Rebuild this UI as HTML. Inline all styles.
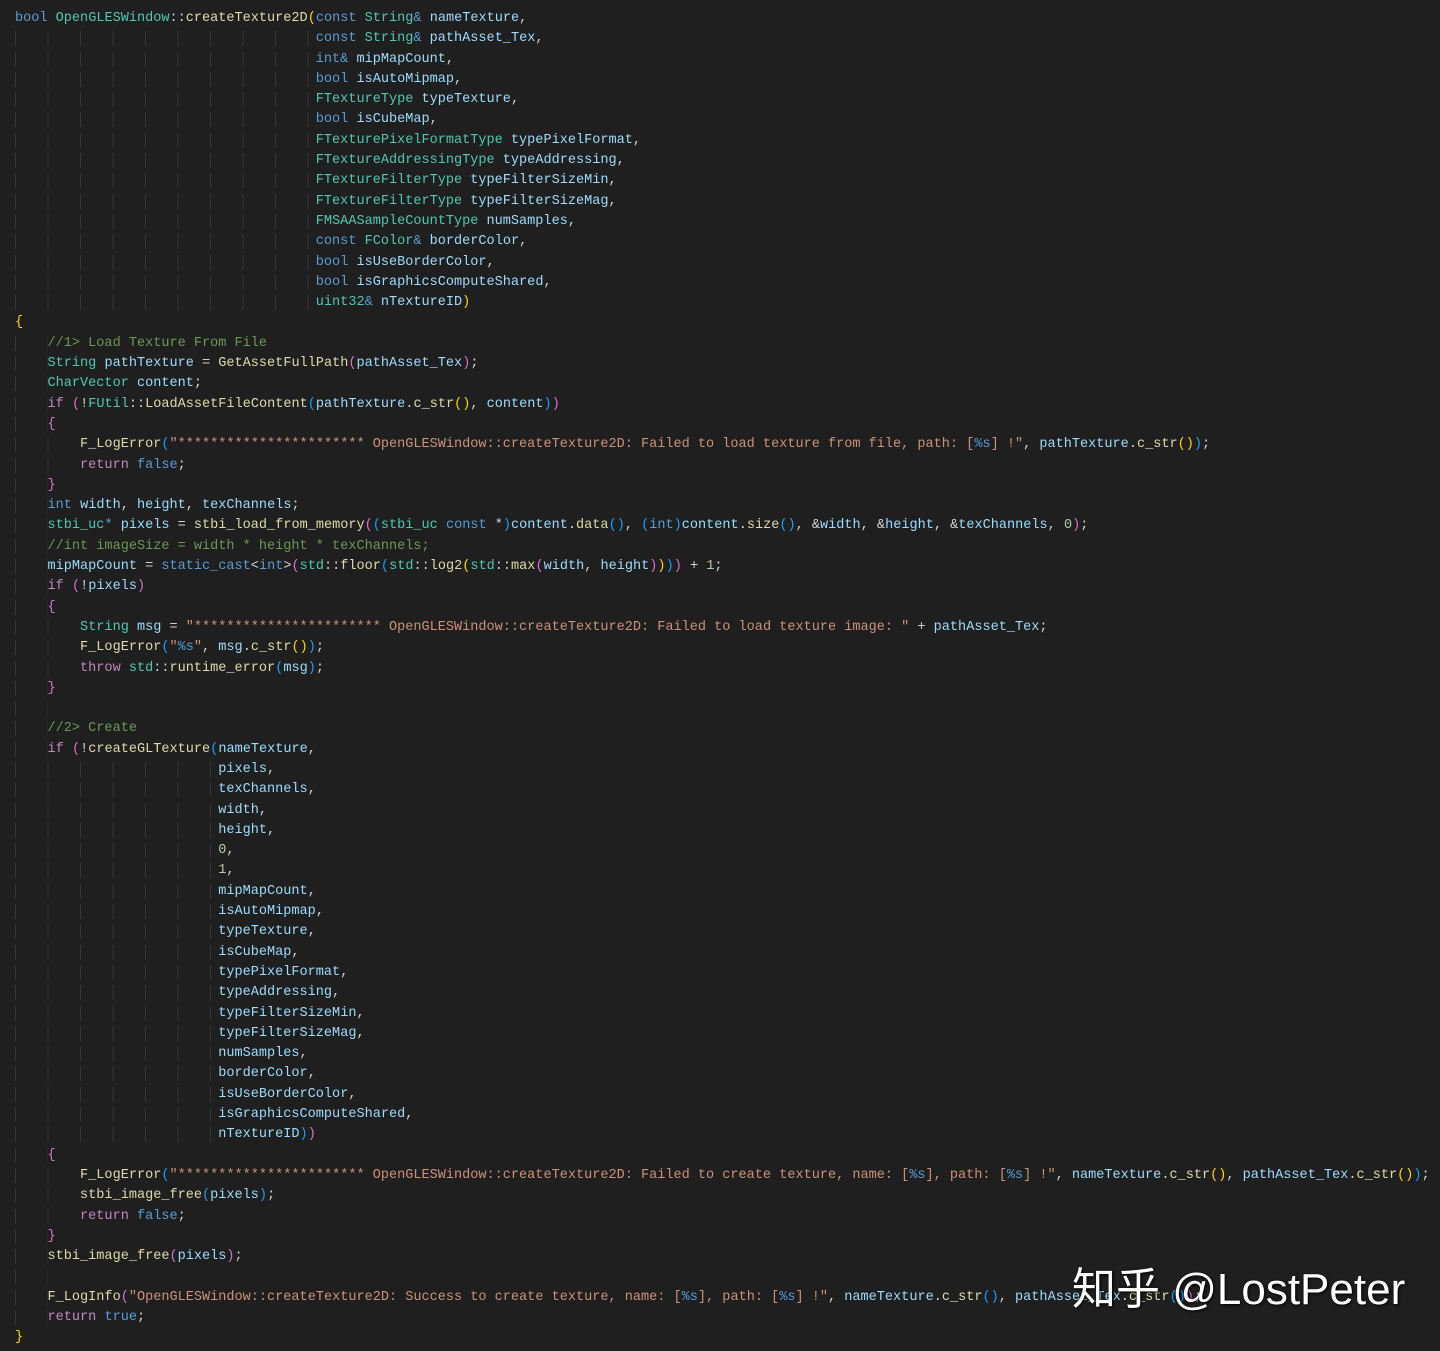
<!DOCTYPE html>
<html><head><meta charset="utf-8">
<style>
html,body{margin:0;padding:0;background:#1f1f1f;}
body{width:1440px;height:1351px;overflow:hidden;position:relative;}
#code{position:absolute;left:15px;top:9px;font-family:"Liberation Mono",monospace;font-size:13.55px;line-height:20.3px;color:#d4d4d4;}
#code div{height:20.3px;white-space:pre;}
.w{background:repeating-linear-gradient(to right,#363636 0,#363636 1px,transparent 1px,transparent 4ch);}
.k{color:#569cd6}.c{color:#c586c0}.t{color:#4ec9b0}.f{color:#dcdcaa}.v{color:#9cdcfe}.s{color:#ce9178}.m{color:#6a9955}.n{color:#b5cea8}
.b1{color:#ffd700}.b2{color:#da70d6}.b3{color:#179fff}
#wm{position:absolute;left:1072px;top:1262px;font-family:"Liberation Sans","Noto Sans CJK SC",sans-serif;font-size:44px;color:#fff;text-shadow:1px 1px 3px #000;line-height:56px;white-space:nowrap;}
</style></head><body>
<div id="code"><div><span class="k">bool</span> <span class="t">OpenGLESWindow</span>::<span class="f">createTexture2D</span><span class="b1">(</span><span class="k">const</span> <span class="t">String</span><span class="k">&amp;</span> <span class="v">nameTexture</span>,</div>
<div><span class="w">                                     </span><span class="k">const</span> <span class="t">String</span><span class="k">&amp;</span> <span class="v">pathAsset_Tex</span>,</div>
<div><span class="w">                                     </span><span class="k">int&amp;</span> <span class="v">mipMapCount</span>,</div>
<div><span class="w">                                     </span><span class="k">bool</span> <span class="v">isAutoMipmap</span>,</div>
<div><span class="w">                                     </span><span class="t">FTextureType</span> <span class="v">typeTexture</span>,</div>
<div><span class="w">                                     </span><span class="k">bool</span> <span class="v">isCubeMap</span>,</div>
<div><span class="w">                                     </span><span class="t">FTexturePixelFormatType</span> <span class="v">typePixelFormat</span>,</div>
<div><span class="w">                                     </span><span class="t">FTextureAddressingType</span> <span class="v">typeAddressing</span>,</div>
<div><span class="w">                                     </span><span class="t">FTextureFilterType</span> <span class="v">typeFilterSizeMin</span>,</div>
<div><span class="w">                                     </span><span class="t">FTextureFilterType</span> <span class="v">typeFilterSizeMag</span>,</div>
<div><span class="w">                                     </span><span class="t">FMSAASampleCountType</span> <span class="v">numSamples</span>,</div>
<div><span class="w">                                     </span><span class="k">const</span> <span class="t">FColor</span><span class="k">&amp;</span> <span class="v">borderColor</span>,</div>
<div><span class="w">                                     </span><span class="k">bool</span> <span class="v">isUseBorderColor</span>,</div>
<div><span class="w">                                     </span><span class="k">bool</span> <span class="v">isGraphicsComputeShared</span>,</div>
<div><span class="w">                                     </span><span class="t">uint32</span><span class="k">&amp;</span> <span class="v">nTextureID</span><span class="b1">)</span></div>
<div><span class="b1">{</span></div>
<div><span class="w">    </span><span class="m">//1&gt; Load Texture From File</span></div>
<div><span class="w">    </span><span class="t">String</span> <span class="v">pathTexture</span> = <span class="f">GetAssetFullPath</span><span class="b2">(</span><span class="v">pathAsset_Tex</span><span class="b2">)</span>;</div>
<div><span class="w">    </span><span class="t">CharVector</span> <span class="v">content</span>;</div>
<div><span class="w">    </span><span class="c">if</span> <span class="b2">(</span>!<span class="t">FUtil</span>::<span class="f">LoadAssetFileContent</span><span class="b3">(</span><span class="v">pathTexture</span>.<span class="f">c_str</span><span class="b1">()</span>, <span class="v">content</span><span class="b3">)</span><span class="b2">)</span></div>
<div><span class="w">    </span><span class="b2">{</span></div>
<div><span class="w">        </span><span class="f">F_LogError</span><span class="b3">(</span><span class="s">"*********************** OpenGLESWindow::createTexture2D: Failed to load texture from file, path: [</span><span class="k">%s</span><span class="s">] !"</span>, <span class="v">pathTexture</span>.<span class="f">c_str</span><span class="b1">()</span><span class="b3">)</span>;</div>
<div><span class="w">        </span><span class="c">return</span> <span class="k">false</span>;</div>
<div><span class="w">    </span><span class="b2">}</span></div>
<div><span class="w">    </span><span class="k">int</span> <span class="v">width</span>, <span class="v">height</span>, <span class="v">texChannels</span>;</div>
<div><span class="w">    </span><span class="t">stbi_uc</span><span class="k">*</span> <span class="v">pixels</span> = <span class="f">stbi_load_from_memory</span><span class="b2">(</span><span class="b3">(</span><span class="t">stbi_uc</span> <span class="k">const</span> *<span class="b3">)</span><span class="v">content</span>.<span class="f">data</span><span class="b3">()</span>, <span class="b3">(</span><span class="k">int</span><span class="b3">)</span><span class="v">content</span>.<span class="f">size</span><span class="b3">()</span>, &amp;<span class="v">width</span>, &amp;<span class="v">height</span>, &amp;<span class="v">texChannels</span>, <span class="n">0</span><span class="b2">)</span>;</div>
<div><span class="w">    </span><span class="m">//int imageSize = width * height * texChannels;</span></div>
<div><span class="w">    </span><span class="v">mipMapCount</span> = <span class="k">static_cast</span>&lt;<span class="k">int</span>&gt;<span class="b2">(</span><span class="t">std</span>::<span class="f">floor</span><span class="b3">(</span><span class="t">std</span>::<span class="f">log2</span><span class="b1">(</span><span class="t">std</span>::<span class="f">max</span><span class="b2">(</span><span class="v">width</span>, <span class="v">height</span><span class="b2">)</span><span class="b1">)</span><span class="b3">)</span><span class="b2">)</span> + <span class="n">1</span>;</div>
<div><span class="w">    </span><span class="c">if</span> <span class="b2">(</span>!<span class="v">pixels</span><span class="b2">)</span></div>
<div><span class="w">    </span><span class="b2">{</span></div>
<div><span class="w">        </span><span class="t">String</span> <span class="v">msg</span> = <span class="s">"*********************** OpenGLESWindow::createTexture2D: Failed to load texture image: "</span> + <span class="v">pathAsset_Tex</span>;</div>
<div><span class="w">        </span><span class="f">F_LogError</span><span class="b3">(</span><span class="s">"</span><span class="k">%s</span><span class="s">"</span>, <span class="v">msg</span>.<span class="f">c_str</span><span class="b1">()</span><span class="b3">)</span>;</div>
<div><span class="w">        </span><span class="c">throw</span> <span class="t">std</span>::<span class="f">runtime_error</span><span class="b3">(</span><span class="v">msg</span><span class="b3">)</span>;</div>
<div><span class="w">    </span><span class="b2">}</span></div>
<div><span class="w">    </span></div>
<div><span class="w">    </span><span class="m">//2&gt; Create</span></div>
<div><span class="w">    </span><span class="c">if</span> <span class="b2">(</span>!<span class="f">createGLTexture</span><span class="b3">(</span><span class="v">nameTexture</span>,</div>
<div><span class="w">                         </span><span class="v">pixels</span>,</div>
<div><span class="w">                         </span><span class="v">texChannels</span>,</div>
<div><span class="w">                         </span><span class="v">width</span>,</div>
<div><span class="w">                         </span><span class="v">height</span>,</div>
<div><span class="w">                         </span><span class="n">0</span>,</div>
<div><span class="w">                         </span><span class="n">1</span>,</div>
<div><span class="w">                         </span><span class="v">mipMapCount</span>,</div>
<div><span class="w">                         </span><span class="v">isAutoMipmap</span>,</div>
<div><span class="w">                         </span><span class="v">typeTexture</span>,</div>
<div><span class="w">                         </span><span class="v">isCubeMap</span>,</div>
<div><span class="w">                         </span><span class="v">typePixelFormat</span>,</div>
<div><span class="w">                         </span><span class="v">typeAddressing</span>,</div>
<div><span class="w">                         </span><span class="v">typeFilterSizeMin</span>,</div>
<div><span class="w">                         </span><span class="v">typeFilterSizeMag</span>,</div>
<div><span class="w">                         </span><span class="v">numSamples</span>,</div>
<div><span class="w">                         </span><span class="v">borderColor</span>,</div>
<div><span class="w">                         </span><span class="v">isUseBorderColor</span>,</div>
<div><span class="w">                         </span><span class="v">isGraphicsComputeShared</span>,</div>
<div><span class="w">                         </span><span class="v">nTextureID</span><span class="b3">)</span><span class="b2">)</span></div>
<div><span class="w">    </span><span class="b2">{</span></div>
<div><span class="w">        </span><span class="f">F_LogError</span><span class="b3">(</span><span class="s">"*********************** OpenGLESWindow::createTexture2D: Failed to create texture, name: [</span><span class="k">%s</span><span class="s">], path: [</span><span class="k">%s</span><span class="s">] !"</span>, <span class="v">nameTexture</span>.<span class="f">c_str</span><span class="b1">()</span>, <span class="v">pathAsset_Tex</span>.<span class="f">c_str</span><span class="b1">()</span><span class="b3">)</span>;</div>
<div><span class="w">        </span><span class="f">stbi_image_free</span><span class="b3">(</span><span class="v">pixels</span><span class="b3">)</span>;</div>
<div><span class="w">        </span><span class="c">return</span> <span class="k">false</span>;</div>
<div><span class="w">    </span><span class="b2">}</span></div>
<div><span class="w">    </span><span class="f">stbi_image_free</span><span class="b2">(</span><span class="v">pixels</span><span class="b2">)</span>;</div>
<div><span class="w">    </span></div>
<div><span class="w">    </span><span class="f">F_LogInfo</span><span class="b2">(</span><span class="s">"OpenGLESWindow::createTexture2D: Success to create texture, name: [</span><span class="k">%s</span><span class="s">], path: [</span><span class="k">%s</span><span class="s">] !"</span>, <span class="v">nameTexture</span>.<span class="f">c_str</span><span class="b3">()</span>, <span class="v">pathAsset_Tex</span>.<span class="f">c_str</span><span class="b3">()</span><span class="b2">)</span>;</div>
<div><span class="w">    </span><span class="c">return</span> <span class="k">true</span>;</div>
<div><span class="b1">}</span></div></div>
<div id="wm">知乎 @LostPeter</div>
</body></html>
